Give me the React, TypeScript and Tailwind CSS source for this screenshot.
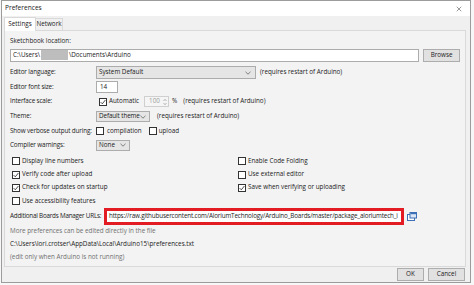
import { X } from 'lucide-react';

const font = { fontFamily: '"Open Sans", "Noto Sans", sans-serif' };

function Box({ checked }: { checked?: boolean }) {
  return (
    <span className="w-[8px] h-[8px] border border-[#333] bg-white flex items-center justify-center shrink-0">
      {checked && (
        <svg width="6" height="6" viewBox="0 0 6 6">
          <path d="M0.6 3.1 L2.3 4.8 L5.4 1" fill="none" stroke="#222" strokeWidth="0.8" />
        </svg>
      )}
    </span>
  );
}

function Chevron() {
  return (
    <svg width="6" height="4" viewBox="0 0 6 4" className="shrink-0">
      <path d="M0.5 0.8 L3 3.2 L5.5 0.8" fill="none" stroke="#555" strokeWidth="0.7" />
    </svg>
  );
}

function Row({ h, label, children }: { h: string; label: string; children?: React.ReactNode }) {
  return (
    <div className={`flex items-center ${h}`}>
      <span className="w-[86px] shrink-0 tracking-[-0.12px]">{label}</span>
      {children}
    </div>
  );
}

function Check({ h, label, checked }: { h: string; label: string; checked?: boolean }) {
  return (
    <div className={`flex items-center gap-[2px] ${h}`}>
      <Box checked={checked} />
      <span>{label}</span>
    </div>
  );
}

export default function App() {
  return (
    <div className="w-[474px] h-[285px] bg-[#f7f7f7] overflow-hidden text-[6.3px] text-[#1b1b1b] leading-none whitespace-nowrap" style={font}>
      <div className="ml-[1px] w-[470px] h-[283px] border border-[#9c9c9c] bg-[#f0f0f0] flex flex-col">
        {/* title bar */}
        <div className="h-[15px] bg-white flex items-center justify-between pl-[3px] pr-[7px] shrink-0">
          <span className="text-[6.6px]">Preferences</span>
          <X className="w-[8px] h-[8px] text-[#333]" strokeWidth={1.5} />
        </div>

        {/* tabs */}
        <div className="h-[14px] flex items-end pl-[2px] shrink-0">
          <div className="h-[14px] w-[32px] bg-white border border-b-0 border-[#d9d9d9] flex items-center justify-center relative top-[1px] z-10">
            Settings
          </div>
          <div className="h-[12px] w-[27px] bg-[#f0f0f0] border border-l-0 border-b-0 border-[#d9d9d9] flex items-center justify-center">
            Network
          </div>
        </div>

        {/* panel */}
        <div className="ml-[2px] w-[462px] h-[237px] border border-[#d9d9d9] bg-[#f3f3f3] flex flex-col px-[5px] pt-[3px] shrink-0">
          <div className="h-[14px] flex items-center">Sketchbook location:</div>
          <div className="h-[14px] flex items-center gap-[4px]">
            <div className="w-[411px] h-[13px] bg-white border border-[#acacac] flex items-center pl-[2px]">
              C:\Users\<span className="w-[27px] h-[10px] bg-[#bdbdbd] mx-[1px]" />\Documents\Arduino
            </div>
            <div className="w-[37px] h-[13px] bg-[#e1e1e1] border border-[#adadad] flex items-center justify-center">Browse</div>
          </div>

          <div className="h-[3px]" />
          <Row h="h-[15px]" label="Editor language:">
            <div className="w-[160px] h-[13px] bg-[#e5e5e5] border border-[#acacac] flex items-center justify-between pl-[2px] pr-[4px]">
              <span>System Default</span>
              <Chevron />
            </div>
            <span className="ml-[4px]">(requires restart of Arduino)</span>
          </Row>
          <Row h="h-[14px]" label="Editor font size:">
            <div className="w-[22px] h-[12px] bg-white border border-[#acacac] flex items-center pl-[3px]">14</div>
          </Row>
          <Row h="h-[15px]" label="Interface scale:">
            <div className="ml-[3px] flex items-center gap-[2px]">
              <Box checked />
              <span>Automatic</span>
            </div>
            <div className="ml-[5px] w-[25px] h-[11px] bg-[#f5f5f5] border border-[#cfcfcf] flex items-center justify-between pl-[4px] pr-[1px] text-[#9a9a9a]">
              <span>100</span>
              <svg width="4" height="8" viewBox="0 0 4 8">
                <path d="M0.5 3 L2 1.3 L3.5 3 M0.5 5 L2 6.7 L3.5 5" fill="none" stroke="#888" strokeWidth="0.6" />
              </svg>
            </div>
            <span className="ml-[3px]">%</span>
            <span className="ml-[6px]">(requires restart of Arduino)</span>
          </Row>
          <Row h="h-[15px]" label="Theme:">
            <div className="w-[54px] h-[11px] bg-[#e5e5e5] border border-[#acacac] flex items-center justify-between pl-[2px] pr-[3px]">
              <span className="tracking-[-0.1px]">Default theme</span>
              <Chevron />
            </div>
            <span className="ml-[7px]">(requires restart of Arduino)</span>
          </Row>
          <Row h="h-[14px]" label="Show verbose output during:">
            <Box />
            <span className="ml-[3px]">compilation</span>
            <span className="ml-[7px]"><Box /></span>
            <span className="ml-[2px]">upload</span>
          </Row>
          <Row h="h-[14px]" label="Compiler warnings:">
            <div className="w-[34px] h-[11px] bg-[#e5e5e5] border border-[#acacac] flex items-center justify-between pl-[2px] pr-[3px]">
              <span>None</span>
              <Chevron />
            </div>
          </Row>

          <div className="h-[2px]" />
          <div className="flex pl-[2px]">
            <div className="w-[226px] flex flex-col">
              <Check h="h-[14px]" label="Display line numbers" />
              <Check h="h-[13px]" label="Verify code after upload" checked />
              <Check h="h-[13px]" label="Check for updates on startup" checked />
              <Check h="h-[14px]" label="Use accessibility features" />
            </div>
            <div className="flex flex-col">
              <Check h="h-[14px]" label="Enable Code Folding" />
              <Check h="h-[13px]" label="Use external editor" />
              <Check h="h-[13px]" label="Save when verifying or uploading" checked />
            </div>
          </div>

          <div className="h-[17px] flex items-center">
            <span className="w-[94px] shrink-0 tracking-[-0.22px]">Additional Boards Manager URLs:</span>
            <div className="w-[300px] h-[17px] border-[3px] border-[#e31b23] bg-white flex items-center pl-[2px] overflow-hidden tracking-[-0.15px]">
              https://raw.githubusercontent.com/AloriumTechnology/Arduino_Boards/master/package_aloriumtech_i
            </div>
            <svg width="10" height="9" viewBox="0 0 10 9" className="ml-[3px]">
              <rect x="0.5" y="2.5" width="7" height="6" fill="#fff" stroke="#3b6fb6" />
              <rect x="3" y="0.5" width="6.5" height="5.5" fill="#dbe6f4" stroke="#3b6fb6" />
              <rect x="3.5" y="1" width="5.5" height="1.2" fill="#3b6fb6" />
            </svg>
          </div>
          <div className="h-[13px] flex items-center text-[#707070]">More preferences can be edited directly in the file</div>
          <div className="h-[13px] flex items-center">C:\Users\lori.crotser\AppData\Local\Arduino15\preferences.txt</div>
          <div className="h-[13px] flex items-center text-[#707070]">(edit only when Arduino is not running)</div>
        </div>

        {/* buttons */}
        <div className="flex justify-end gap-[4px] pr-[5px] pt-[1px]">
          <div className="w-[27px] h-[13px] bg-[#e1e1e1] border border-[#adadad] flex items-center justify-center">OK</div>
          <div className="w-[37px] h-[13px] bg-[#e1e1e1] border border-[#adadad] flex items-center justify-center">Cancel</div>
        </div>
      </div>
    </div>
  );
}
